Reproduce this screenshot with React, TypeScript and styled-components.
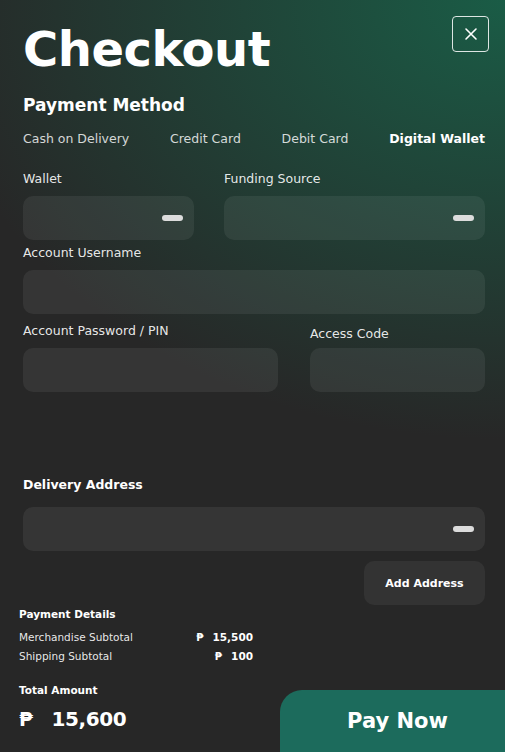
import React, { useState } from 'react';
import styled, { createGlobalStyle } from 'styled-components';

const font = `'DejaVu Sans', 'Open Sans', sans-serif`;

const GlobalStyle = createGlobalStyle`
  * { box-sizing: border-box; }
  body {
    margin: 0;
    font-family: ${font};
    background: #272727;
  }
`;

const Page = styled.div`
  width: 505px;
  height: 752px;
  overflow: hidden;
  display: flex;
  flex-direction: column;
  color: #ffffff;
  background:
    radial-gradient(ellipse 580px 440px at 100% 0%, rgba(26, 92, 70, 1) 0%, rgba(26, 92, 70, 0.55) 45%, rgba(26, 92, 70, 0) 100%),
    #272727;
`;

const Content = styled.div`
  padding: 16px 20px 0 23px;
  display: flex;
  flex-direction: column;
`;

const Header = styled.div`
  display: flex;
  justify-content: space-between;
  align-items: flex-start;
`;

const Title = styled.h1`
  margin: 6px 0 0;
  font-size: 48px;
  line-height: 54px;
  font-weight: 700;
  letter-spacing: -0.5px;
`;

const CloseButton = styled.button`
  width: 37px;
  height: 36px;
  margin-right: -4px;
  border: 1px solid rgba(255, 255, 255, 0.85);
  border-radius: 4px;
  background: transparent;
  color: #fff;
  display: flex;
  align-items: center;
  justify-content: center;
  padding: 0;
  cursor: pointer;
`;

const SectionTitle = styled.h2`
  margin: 18px 0 0;
  font-size: 17px;
  line-height: 22px;
  font-weight: 700;
`;

const Tabs = styled.div`
  display: flex;
  justify-content: space-between;
  margin-top: 15px;
`;

const Tab = styled.button<{ $active?: boolean }>`
  background: none;
  border: none;
  padding: 0;
  font-family: ${font};
  font-size: 12.5px;
  line-height: 16px;
  color: ${({ $active }) => ($active ? '#ffffff' : 'rgba(255,255,255,0.82)')};
  font-weight: ${({ $active }) => ($active ? 700 : 400)};
  cursor: pointer;
`;

const Row = styled.div<{ $cols: string; $gap: number; $top: number }>`
  display: grid;
  grid-template-columns: ${({ $cols }) => $cols};
  column-gap: ${({ $gap }) => $gap}px;
  margin-top: ${({ $top }) => $top}px;
`;

const Field = styled.div`
  display: flex;
  flex-direction: column;
`;

const Label = styled.label<{ $shift?: number }>`
  font-size: 12.5px;
  line-height: 16px;
  color: rgba(255, 255, 255, 0.9);
  padding-top: ${({ $shift }) => $shift ?? 0}px;
  margin-bottom: ${({ $shift }) => 9 - ($shift ?? 0)}px;
`;

const BoldLabel = styled.div`
  font-size: 12.5px;
  line-height: 16px;
  font-weight: 700;
  margin-top: 85px;
  margin-bottom: 14px;
`;

const InputBox = styled.div`
  height: 44px;
  border-radius: 10px;
  background: rgba(255, 255, 255, 0.065);
  display: flex;
  align-items: center;
  justify-content: flex-end;
  padding-right: 11px;
`;

const Dash = styled.span`
  width: 21px;
  height: 6px;
  border-radius: 3px;
  background: #dcdcdc;
`;

const AddRow = styled.div`
  display: flex;
  justify-content: flex-end;
  margin-top: 10px;
`;

const AddButton = styled.button`
  width: 121px;
  height: 44px;
  border: none;
  border-radius: 10px;
  background: #333333;
  color: #fff;
  font-family: ${font};
  font-size: 11px;
  font-weight: 700;
  cursor: pointer;
`;

const Summary = styled.div`
  padding-left: 19px;
  width: 253px;
  margin-top: 2px;
`;

const SmallTitle = styled.div`
  font-size: 10.5px;
  line-height: 14px;
  font-weight: 700;
`;

const SummaryLine = styled.div<{ $top: number }>`
  display: flex;
  justify-content: space-between;
  font-size: 10.5px;
  line-height: 14px;
  margin-top: ${({ $top }) => $top}px;
  color: rgba(255, 255, 255, 0.9);
`;

const Value = styled.span`
  font-weight: 700;
  color: #fff;
  display: flex;
  gap: 9px;
`;

const Footer = styled.div`
  margin-top: auto;
  display: flex;
  justify-content: space-between;
  align-items: flex-end;
`;

const Total = styled.div`
  padding-left: 19px;
  padding-bottom: 20px;
`;

const TotalAmount = styled.div`
  display: flex;
  gap: 19px;
  font-size: 20px;
  line-height: 26px;
  font-weight: 700;
  letter-spacing: -0.4px;
  margin-top: 9px;
`;

const PayButton = styled.button`
  width: 225px;
  height: 62px;
  border: none;
  border-top-left-radius: 22px;
  background: #1c6b5c;
  color: #fff;
  font-family: ${font};
  font-size: 21px;
  font-weight: 700;
  padding: 0 0 0 10px;
  cursor: pointer;
`;

const methods = ['Cash on Delivery', 'Credit Card', 'Debit Card', 'Digital Wallet'];

const App = () => {
  const [method, setMethod] = useState('Digital Wallet');

  return (
    <Page>
      <GlobalStyle />
      <Content>
        <Header>
          <Title>Checkout</Title>
          <CloseButton aria-label="Close">
            <svg width="14" height="14" viewBox="0 0 14 14" fill="none" stroke="#fff" strokeWidth="1.6" strokeLinecap="round">
              <path d="M2 2 L12 12 M12 2 L2 12" />
            </svg>
          </CloseButton>
        </Header>
        <SectionTitle>Payment Method</SectionTitle>
        <Tabs>
          {methods.map((m) => (
            <Tab key={m} $active={m === method} onClick={() => setMethod(m)}>
              {m}
            </Tab>
          ))}
        </Tabs>

        <Row $cols="171px 1fr" $gap={30} $top={24}>
          <Field>
            <Label>Wallet</Label>
            <InputBox>
              <Dash />
            </InputBox>
          </Field>
          <Field>
            <Label>Funding Source</Label>
            <InputBox>
              <Dash />
            </InputBox>
          </Field>
        </Row>

        <Row $cols="1fr" $gap={0} $top={5}>
          <Field>
            <Label>Account Username</Label>
            <InputBox />
          </Field>
        </Row>

        <Row $cols="255px 1fr" $gap={32} $top={9}>
          <Field>
            <Label>Account Password / PIN</Label>
            <InputBox />
          </Field>
          <Field>
            <Label $shift={3}>Access Code</Label>
            <InputBox />
          </Field>
        </Row>

        <BoldLabel>Delivery Address</BoldLabel>
        <InputBox>
          <Dash />
        </InputBox>
        <AddRow>
          <AddButton>Add Address</AddButton>
        </AddRow>
      </Content>

      <Summary>
        <SmallTitle>Payment Details</SmallTitle>
        <SummaryLine $top={9}>
          <span>Merchandise Subtotal</span>
          <Value>
            <span>₱</span>
            <span>15,500</span>
          </Value>
        </SummaryLine>
        <SummaryLine $top={5}>
          <span>Shipping Subtotal</span>
          <Value>
            <span>₱</span>
            <span>100</span>
          </Value>
        </SummaryLine>
      </Summary>

      <Footer>
        <Total>
          <SmallTitle>Total Amount</SmallTitle>
          <TotalAmount>
            <span>₱</span>
            <span>15,600</span>
          </TotalAmount>
        </Total>
        <PayButton>Pay Now</PayButton>
      </Footer>
    </Page>
  );
};

export default App;
